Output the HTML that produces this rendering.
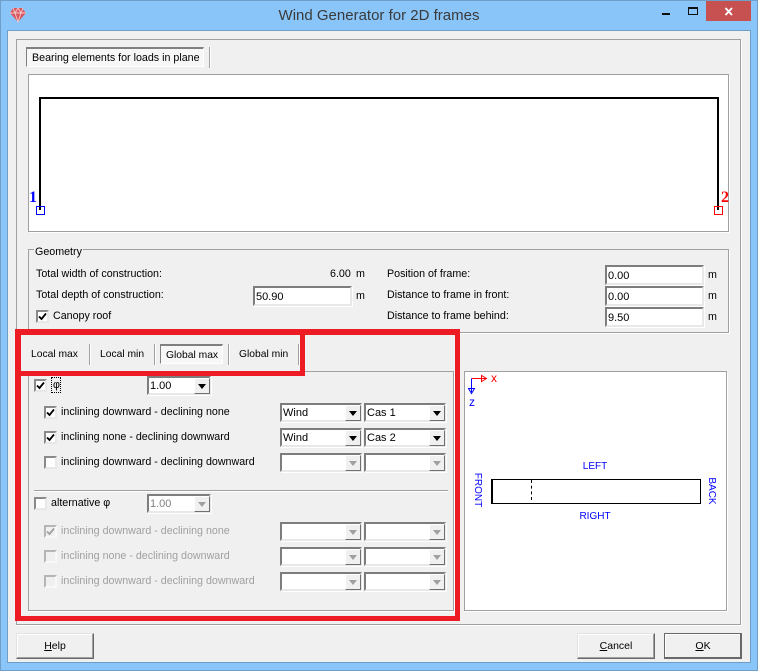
<!DOCTYPE html>
<html><head><meta charset="utf-8"><style>
html,body{margin:0;padding:0;width:758px;height:671px;overflow:hidden;background:#8ac5fa}
body{position:relative;font-family:"Liberation Sans",sans-serif;font-size:10.7px;color:#000}
div{position:absolute;box-sizing:border-box}
.t{white-space:nowrap;line-height:14px;height:14px;font-size:10.7px}
.tb{font-size:10.3px}
.g{color:#a0a0a0}
.bx{border:1px solid #a0a0a0;box-shadow:1px 1px 0 #fff}
.w{background:#fff}
.s{width:1px;background:#a0a0a0;box-shadow:1px 0 0 #fff}
.in{background:#fff;border:2px solid;border-color:#7d7d7d #e8e8e8 #e8e8e8 #7d7d7d;box-shadow:1px 1px 0 #fff;line-height:18px;padding-left:1px;font-size:11px;white-space:nowrap}
.cb{width:13px;height:13px;background:#fff;border:2px solid;border-color:#8a8a8a #e8e8e8 #e8e8e8 #8a8a8a}
.cb.d{background:#f0f0f0;border-color:#b5b5b5 #f8f8f8 #f8f8f8 #b5b5b5}
.cb svg{position:absolute;left:0;top:0}
.c{background:#fff;border:2px solid;border-color:#7d7d7d #e8e8e8 #e8e8e8 #7d7d7d;box-shadow:1px 1px 0 #fff;height:19px;line-height:17px;padding-left:1px;font-size:11px}
.c i{position:absolute;right:-1px;top:0;width:16px;height:16px;background:#f0f0f0;border:1px solid;border-color:#fff #707070 #707070 #fff;box-sizing:border-box}
.c i:after{content:"";position:absolute;left:3px;top:5px;border:4px solid transparent;border-top:5px solid #000;border-bottom:0}
.c.d i:after{border-top-color:#a0a0a0}
.c.d{color:#808080}
.r{background:#ed1c24}
.b{background:#f0f0f0;border:1px solid;border-color:#e3e3e3 #696969 #696969 #e3e3e3;box-shadow:inset -1px -1px 0 #a0a0a0,inset 1px 1px 0 #fff;text-align:center;line-height:24px;font-size:10.5px}
.bl{color:#00f;font-size:10px}
u{text-decoration:underline}
</style></head><body>
<div style="left:0;top:0;width:758px;height:671px;border:1px solid #6f9fc9"></div>
<div class="t" style="left:0;width:758px;top:6px;height:20px;line-height:20px;text-align:center;font-size:15px;color:#3a3a3a">Wind Generator for 2D frames</div>
<svg style="position:absolute;left:9px;top:7px" width="18" height="16" viewBox="0 0 18 16"><path d="M4 1H13L17 6L9 15L1 6Z" fill="#d9585f"/><path d="M4 1L6 6L9 15L12 6L14 1M1 6H17M6 6L9 1L12 6" stroke="#f7c9cb" stroke-width=".9" fill="none"/></svg>
<div style="left:662px;top:13px;width:8px;height:2px;background:#111"></div>
<div style="left:688px;top:7px;width:10px;height:8px;border:1px solid #111;border-top-width:2px"></div>
<div style="left:706px;top:1px;width:45px;height:20px;background:#c75050"></div>
<svg style="position:absolute;left:724px;top:7px" width="10" height="9"><path d="M1.5 1L8 8M8 1L1.5 8" stroke="#fff" stroke-width="1.8"/></svg>

<div style="left:7px;top:30px;width:744px;height:633px;background:#f0f0f0;border:1px solid #6f9fc9"></div>
<div class="bx" style="left:16px;top:39px;width:725px;height:586px"></div>

<div style="left:26px;top:47px;width:178px;height:20px;background:#f7f7f7;border:1px solid;border-color:#808080 #fff #fff #808080;border-width:2px 1px 1px 1px"></div>
<div class="t" style="left:32px;top:51px">Bearing elements for loads in plane</div>
<div class="s" style="left:209px;top:47px;height:21px"></div>

<div class="bx w" style="left:28px;top:74px;width:701px;height:158px"></div>
<div style="left:39px;top:97px;width:680px;height:2px;background:#000"></div>
<div style="left:39px;top:97px;width:2px;height:113px;background:#000"></div>
<div style="left:717px;top:97px;width:2px;height:113px;background:#000"></div>
<div style="left:36px;top:206px;width:9px;height:9px;border:1px solid #00f"></div>
<div style="left:714px;top:206px;width:9px;height:9px;border:1px solid #f00"></div>
<div class="t" style="left:29px;top:189px;height:16px;line-height:16px;font:bold 16px 'Liberation Serif',serif;color:#00f">1</div>
<div class="t" style="left:721px;top:189px;height:16px;line-height:16px;font:bold 16px 'Liberation Serif',serif;color:#f00">2</div>

<div class="bx" style="left:28px;top:249px;width:701px;height:84px"></div>
<div class="t" style="left:34px;top:245px;background:#f0f0f0;padding:0 1px">Geometry</div>
<div class="t" style="left:36px;top:267px">Total width of construction:</div>
<div class="t" style="left:330px;top:267px">6.00</div>
<div class="t" style="left:356px;top:267px">m</div>
<div class="t" style="left:36px;top:288px">Total depth of construction:</div>
<div class="in" style="left:253px;top:286px;width:99px;height:20px">50.90</div>
<div class="t" style="left:356px;top:289px">m</div>
<div class="cb" style="left:36px;top:310px"><svg width="9" height="9"><path d="M1 4.5L3.5 7L8 1.5" stroke="#000" stroke-width="1.8" fill="none"/></svg></div>
<div class="t" style="left:53px;top:309px">Canopy roof</div>
<div class="t" style="left:387px;top:267px">Position of frame:</div>
<div class="t" style="left:387px;top:288px">Distance to frame in front:</div>
<div class="t" style="left:387px;top:309px">Distance to frame behind:</div>
<div class="in" style="left:605px;top:265px;width:99px;height:20px">0.00</div>
<div class="in" style="left:605px;top:286px;width:99px;height:20px">0.00</div>
<div class="in" style="left:605px;top:307px;width:99px;height:20px">9.50</div>
<div class="t" style="left:708px;top:268px">m</div>
<div class="t" style="left:708px;top:289px">m</div>
<div class="t" style="left:708px;top:310px">m</div>

<div class="bx" style="left:28px;top:371px;width:426px;height:240px"></div>
<div class="t tb" style="left:31px;top:348px">Local max</div>
<div class="s" style="left:89px;top:344px;height:21px"></div>
<div class="t tb" style="left:100px;top:348px">Local min</div>
<div class="s" style="left:154px;top:344px;height:21px"></div>
<div style="left:160px;top:344px;width:63px;height:20px;background:#f7f7f7;border:1px solid;border-color:#808080 #fff #fff #808080;border-width:2px 1px 1px 1px"></div>
<div class="t tb" style="left:166px;top:349px">Global max</div>
<div class="s" style="left:228px;top:344px;height:21px"></div>
<div class="t tb" style="left:239px;top:348px">Global min</div>
<div class="s" style="left:298px;top:344px;height:21px"></div>

<div class="cb" style="left:34px;top:379px"><svg width="9" height="9"><path d="M1 4.5L3.5 7L8 1.5" stroke="#000" stroke-width="1.8" fill="none"/></svg></div>
<div style="left:51px;top:377px;width:10px;height:16px;border:1px dotted #000"></div>
<div class="t" style="left:53px;top:378px">φ</div>
<div class="c" style="left:147px;top:376px;width:64px">1.00<i></i></div>

<div class="cb" style="left:44px;top:406px"><svg width="9" height="9"><path d="M1 4.5L3.5 7L8 1.5" stroke="#000" stroke-width="1.8" fill="none"/></svg></div>
<div class="t" style="left:61px;top:405px">inclining downward - declining none</div>
<div class="c" style="left:280px;top:403px;width:82px">Wind<i></i></div>
<div class="c" style="left:364px;top:403px;width:82px">Cas 1<i></i></div>

<div class="cb" style="left:44px;top:431px"><svg width="9" height="9"><path d="M1 4.5L3.5 7L8 1.5" stroke="#000" stroke-width="1.8" fill="none"/></svg></div>
<div class="t" style="left:61px;top:430px">inclining none - declining downward</div>
<div class="c" style="left:280px;top:428px;width:82px">Wind<i></i></div>
<div class="c" style="left:364px;top:428px;width:82px">Cas 2<i></i></div>

<div class="cb" style="left:44px;top:456px"></div>
<div class="t" style="left:61px;top:455px">inclining downward - declining downward</div>
<div class="c d" style="left:280px;top:453px;width:82px"><i></i></div>
<div class="c d" style="left:364px;top:453px;width:82px"><i></i></div>

<div class="s" style="left:34px;top:490px;width:414px;height:1px;box-shadow:0 1px 0 #fff"></div>

<div class="cb" style="left:34px;top:497px"></div>
<div class="t" style="left:51px;top:496px">alternative φ</div>
<div class="c d" style="left:147px;top:494px;width:64px">1.00<i></i></div>

<div class="cb d" style="left:44px;top:525px"><svg width="9" height="9"><path d="M1 4.5L3.5 7L8 1.5" stroke="#a0a0a0" stroke-width="1.8" fill="none"/></svg></div>
<div class="t g" style="left:61px;top:524px">inclining downward - declining none</div>
<div class="c d" style="left:280px;top:522px;width:82px"><i></i></div>
<div class="c d" style="left:364px;top:522px;width:82px"><i></i></div>

<div class="cb d" style="left:44px;top:550px"></div>
<div class="t g" style="left:61px;top:549px">inclining none - declining downward</div>
<div class="c d" style="left:280px;top:547px;width:82px"><i></i></div>
<div class="c d" style="left:364px;top:547px;width:82px"><i></i></div>

<div class="cb d" style="left:44px;top:575px"></div>
<div class="t g" style="left:61px;top:574px">inclining downward - declining downward</div>
<div class="c d" style="left:280px;top:572px;width:82px"><i></i></div>
<div class="c d" style="left:364px;top:572px;width:82px"><i></i></div>

<div class="bx w" style="left:464px;top:371px;width:263px;height:240px"></div>
<svg style="position:absolute;left:464px;top:371px" width="40" height="40"><path d="M7.5 7.5H22" stroke="#f00" fill="none"/><path d="M7.5 7.5V21" stroke="#00f"/><path d="M17.5 4.5V10.5L22.5 7.5Z" fill="none" stroke="#f00"/><path d="M4.5 17.5H10.5L7.5 22.5Z" fill="none" stroke="#00f"/></svg>
<div class="t" style="left:491px;top:371px;color:#f00;font-size:12px">x</div>
<div class="t bl" style="left:469px;top:395px;font-size:12px">z</div>
<div style="left:491px;top:479px;width:210px;height:25px;border:1px solid #000;border-left-width:2px;background:#fff"></div>
<div style="left:531px;top:480px;height:20px;width:1px;border-left:1px dashed #000"></div>
<div class="t bl" style="left:565px;width:60px;text-align:center;top:460px">LEFT</div>
<div class="t bl" style="left:565px;width:60px;text-align:center;top:510px">RIGHT</div>
<div class="t bl" style="left:452px;width:50px;text-align:center;top:483px;transform:rotate(90deg)">FRONT</div>
<div class="t bl" style="left:686px;width:50px;text-align:center;top:484px;transform:rotate(90deg)">BACK</div>

<div class="r" style="left:15px;top:329px;width:445px;height:6px"></div>
<div class="r" style="left:15px;top:329px;width:6px;height:292px"></div>
<div class="r" style="left:455px;top:329px;width:5px;height:292px"></div>
<div class="r" style="left:15px;top:616px;width:445px;height:5px"></div>
<div class="r" style="left:20px;top:371px;width:285px;height:5px"></div>
<div class="r" style="left:300px;top:329px;width:5px;height:47px"></div>

<div class="b" style="left:16px;top:633px;width:78px;height:26px"><u>H</u>elp</div>
<div class="b" style="left:577px;top:633px;width:78px;height:26px"><u>C</u>ancel</div>
<div class="b" style="left:664px;top:633px;width:78px;height:26px;border-color:#696969;box-shadow:inset -1px -1px 0 #696969,inset 1px 1px 0 #fff"><u>O</u>K</div>
</body></html>
